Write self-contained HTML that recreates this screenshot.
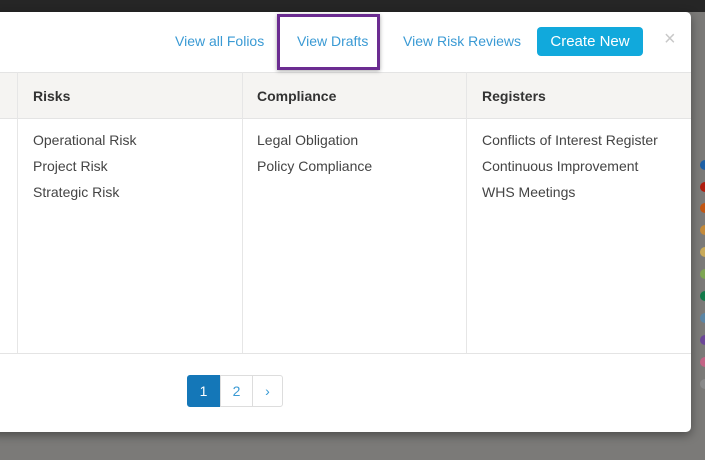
<!DOCTYPE html>
<html><head><style>
body{margin:0;width:705px;height:460px;overflow:hidden;background:#7b7a78;font-family:"Liberation Sans",sans-serif;position:relative}
.top{position:absolute;left:0;top:0;width:705px;height:12px;background:#262626}
.dot{position:absolute;left:700px;width:10px;height:10px;border-radius:5px}
.modal{position:absolute;left:-10px;top:12px;width:701px;height:420px;background:#fff;border-radius:5px;box-shadow:0 3px 10px rgba(0,0,0,.4)}
a{color:#3a9ad4;text-decoration:none;position:absolute;font-size:14px}
.btn{position:absolute;left:547px;top:15px;width:106px;height:29px;background:#11a9dc;color:#fff;border-radius:4px;font-size:15px;text-align:center;line-height:29px}
.x{position:absolute;left:674px;top:16px;color:#c8c8c8;font-size:20px}
.hl{position:absolute;left:287px;top:2px;width:103px;height:56px;border:3px solid #6b2c91;box-sizing:border-box;box-shadow:0 1px 4px rgba(0,0,0,.35)}
.hdr{position:absolute;left:0;top:60px;width:701px;height:45px;background:#f5f4f2;border-top:1px solid #e4e4e4;border-bottom:1px solid #e4e4e4}
.col{position:absolute;top:60px;height:281px;border-left:1px solid #e6e6e6}
.h{position:absolute;top:76px;font-weight:bold;font-size:14px;color:#333}
.it{position:absolute;font-size:14px;color:#444;line-height:26px}
.foot{position:absolute;left:0;top:341px;width:701px;border-top:1px solid #e4e4e4}
.pg{position:absolute;top:363px;height:32px;border:1px solid #ddd;box-sizing:border-box;text-align:center;line-height:30px;font-size:14px;color:#3a9ad4}
</style></head><body>
<div class="top"></div>
<div class="dot" style="top:160px;background:#1d5fa5"></div>
<div class="dot" style="top:182px;background:#b01d0e"></div>
<div class="dot" style="top:203px;background:#c25612"></div>
<div class="dot" style="top:225px;background:#c48a3a"></div>
<div class="dot" style="top:247px;background:#c9aa5a"></div>
<div class="dot" style="top:269px;background:#7ea553"></div>
<div class="dot" style="top:291px;background:#137a4a"></div>
<div class="dot" style="top:313px;background:#5b86a6"></div>
<div class="dot" style="top:335px;background:#6c4798"></div>
<div class="dot" style="top:357px;background:#c36486"></div>
<div class="dot" style="top:379px;background:#8a8a8a"></div>
<div class="modal">
<a style="left:185px;top:21px">View all Folios</a>
<a style="left:307px;top:21px">View Drafts</a>
<a style="left:413px;top:21px">View Risk Reviews</a>
<div class="btn">Create New</div>
<div class="x">×</div>
<div class="hdr"></div>
<div class="hl"></div>
<div class="col" style="left:27px"></div>
<div class="col" style="left:252px"></div>
<div class="col" style="left:476px"></div>
<div class="h" style="left:43px">Risks</div>
<div class="h" style="left:267px">Compliance</div>
<div class="h" style="left:492px">Registers</div>
<div class="it" style="left:43px;top:115px">Operational Risk<br>Project Risk<br>Strategic Risk</div>
<div class="it" style="left:267px;top:115px">Legal Obligation<br>Policy Compliance</div>
<div class="it" style="left:492px;top:115px">Conflicts of Interest Register<br>Continuous Improvement<br>WHS Meetings</div>
<div class="foot"></div>
<div class="pg" style="left:197px;width:33px;background:#1477b8;color:#fff;border-color:#1477b8;border-radius:3px 0 0 3px">1</div>
<div class="pg" style="left:230px;width:33px">2</div>
<div class="pg" style="left:262px;width:31px;border-radius:0 3px 3px 0">›</div>
</div>
</body></html>
